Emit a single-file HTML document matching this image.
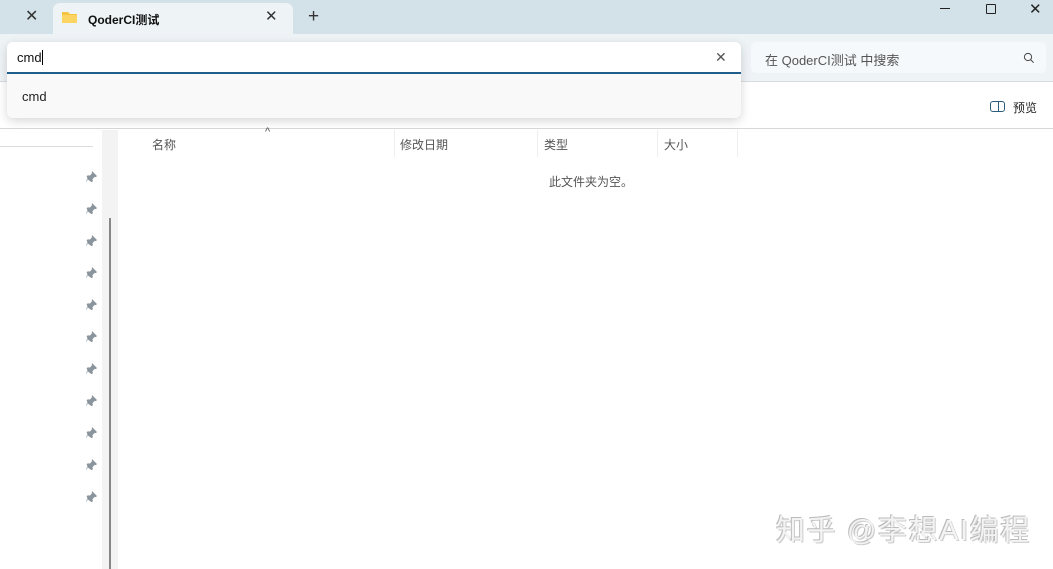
<!DOCTYPE html><html><head><meta charset="utf-8"><style>
*{margin:0;padding:0;box-sizing:border-box}
body{width:1053px;height:569px;overflow:hidden;background:#fff;font-family:"Liberation Sans","Noto Sans CJK SC",sans-serif;position:relative;color:#222}
.a{position:absolute}
.t{font-size:12px;color:#555}
</style></head><body>
<div class="a" style="left:0;top:0;width:1053px;height:34px;background:#d3e1e8"></div>
<div class="a" style="left:53px;top:3px;width:240px;height:32px;background:#eef3f6;border-radius:7px 7px 0 0"></div>
<div class="a" style="left:0;top:34px;width:1053px;height:48px;background:#eef3f6;border-bottom:1px solid #d8dcdf"></div>
<div class="a" style="left:25px;top:6px;font-size:16px;color:#333">✕</div>
<svg class="a" style="left:61px;top:10px" width="17" height="14"><path d="M1 2h6l2 2h7v9H1z" fill="#f5c443"/><path d="M1 5h15v8H1z" fill="#fcd462"/></svg>
<div class="a" style="left:88px;top:11px;font-size:12px;font-weight:bold;color:#111">QoderCI测试</div>
<div class="a" style="left:265px;top:7px;font-size:15px;color:#333">✕</div>
<div class="a" style="left:308px;top:6px;font-size:19px;color:#333;font-weight:300">+</div>
<div class="a" style="left:940px;top:8px;width:10px;height:1px;background:#222"></div>
<div class="a" style="left:986px;top:4px;width:10px;height:10px;border:1px solid #222;border-radius:1px"></div>
<div class="a" style="left:1029px;top:0px;font-size:15px;color:#222">✕</div>
<div class="a" style="left:751px;top:42px;width:295px;height:31px;background:#f6f9fb;border-radius:5px"></div>
<div class="a t" style="left:765px;top:50px;font-size:13px;color:#555">在 QoderCI测试 中搜索</div>
<svg class="a" style="left:1023px;top:52px" width="12" height="12"><circle cx="5" cy="5" r="3.6" fill="none" stroke="#444"/><path d="M7.6 7.6l3 3" stroke="#444"/></svg>
<div class="a" style="left:0;top:82px;width:1053px;height:47px;background:#fff;border-bottom:1px solid #d8d8d8"></div>
<div class="a" style="left:990px;top:101px;width:15px;height:11px;border:1.3px solid #2b5c7a;border-radius:3px"></div>
<div class="a" style="left:998px;top:101px;width:1px;height:11px;background:#2b5c7a"></div>
<div class="a" style="left:1013px;top:99px;font-size:12px;color:#222">预览</div>
<div class="a" style="left:7px;top:42px;width:734px;height:76px;background:#f9f9f9;border-radius:6px;box-shadow:0 3px 10px rgba(0,0,0,.16)"></div>
<div class="a" style="left:7px;top:42px;width:734px;height:32px;background:#fff;border-radius:6px 6px 0 0;border-bottom:2px solid #1f5e8a"></div>
<div class="a" style="left:17px;top:50px;font-size:13px;color:#111">cmd<span style="display:inline-block;width:1px;height:15px;background:#000;vertical-align:-3px"></span></div>
<div class="a" style="left:715px;top:49px;font-size:14px;color:#555">✕</div>
<div class="a" style="left:22px;top:89px;font-size:13px;color:#222">cmd</div>
<div class="a" style="left:0;top:146px;width:93px;height:1px;background:#ddd"></div>
<div class="a" style="left:102px;top:130px;width:16px;height:439px;background:#f3f3f3"></div>
<div class="a" style="left:109px;top:218px;width:2px;height:351px;background:#888"></div>
<div class="a" style="left:394px;top:130px;width:1px;height:27px;background:#eee"></div>
<div class="a" style="left:537px;top:130px;width:1px;height:27px;background:#eee"></div>
<div class="a" style="left:657px;top:130px;width:1px;height:27px;background:#eee"></div>
<div class="a" style="left:737px;top:130px;width:1px;height:27px;background:#eee"></div>
<div class="a t" style="left:265px;top:126px;font-size:11px">^</div>
<div class="a t" style="left:152px;top:136px">名称</div>
<div class="a t" style="left:400px;top:136px">修改日期</div>
<div class="a t" style="left:544px;top:136px">类型</div>
<div class="a t" style="left:664px;top:136px">大小</div>
<div class="a t" style="left:549px;top:173px">此文件夹为空。</div>
<svg width="0" height="0" style="position:absolute"><defs><g id="p"><path d="M6 0l5 5-1.2 1.2-1-.4-2.3 2.3.4 2-1.2 1.2L2 8.6 0 10.6 0 10 1.6 8 .6 5.4l1.2-1.2 2 .4 2.3-2.3-.4-1z" fill="#8a949c"/></g></defs></svg>
<svg class="a" style="left:86px;top:171px" width="13" height="340">
<use href="#p" y="0"/><use href="#p" y="32"/><use href="#p" y="64"/><use href="#p" y="96"/><use href="#p" y="128"/><use href="#p" y="160"/><use href="#p" y="192"/><use href="#p" y="224"/><use href="#p" y="256"/><use href="#p" y="288"/><use href="#p" y="320"/>
</svg>
<div class="a" style="left:776px;top:507px;font-size:29px;color:#f3f3f3;text-shadow:-1px -1px 0 #bbb,1px 1px 0 #ccc;letter-spacing:1.6px">知乎 @李想AI编程</div>
</body></html>
